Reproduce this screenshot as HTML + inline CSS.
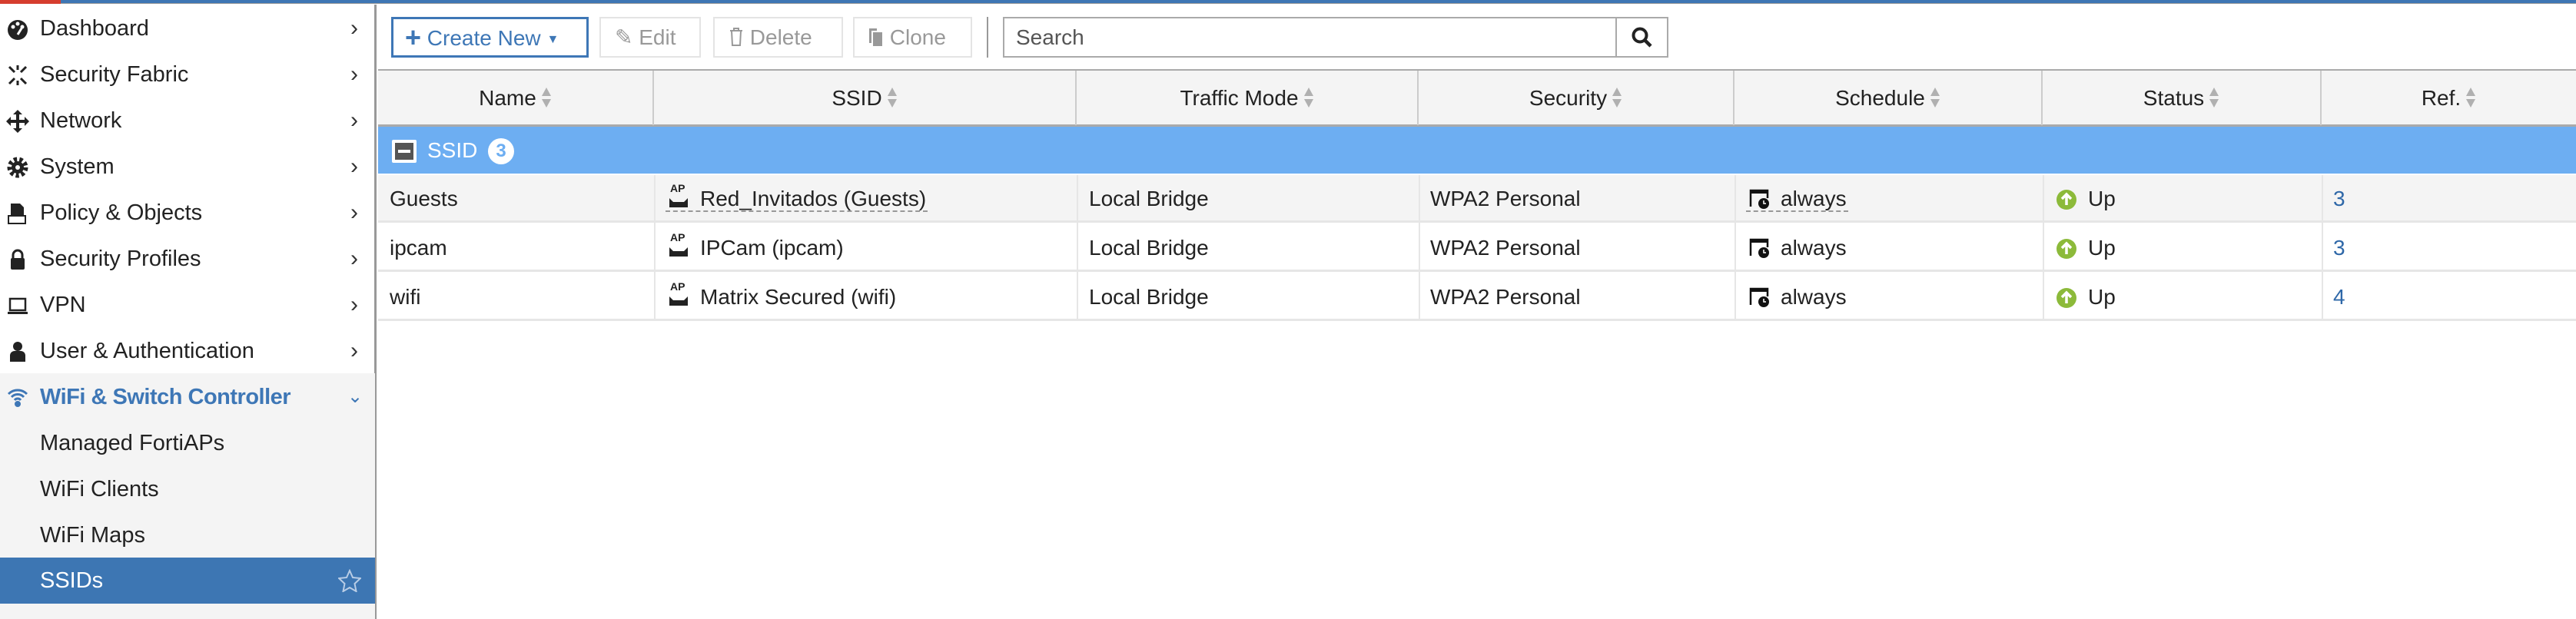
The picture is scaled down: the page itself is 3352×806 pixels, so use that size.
<!DOCTYPE html>
<html><head><meta charset="utf-8"><style>
*{margin:0;padding:0;box-sizing:border-box}
body{width:3352px;height:806px;overflow:hidden;background:#fff;font-family:"Liberation Sans",sans-serif;color:#222;position:relative}
.a{position:absolute}
.top{left:0;top:0;width:3352px;height:5px;background:#3e76b4;border-bottom:1px solid #999}
.side{left:0;top:6px;width:490px;height:800px;background:#fff;border-right:3px solid #999}
.it{position:absolute;left:0;width:488px;height:60px;font-size:29px;line-height:60px;padding-left:52px}
.ic{position:absolute;left:8px;top:16px;width:30px;height:30px}
.chev{position:absolute;left:456px;top:0;font-size:30px;color:#333}
.btn{position:absolute;top:22px;height:53px;border:2px solid #e4e4e4;font-size:28px;line-height:49px;color:#999;padding-left:18px}
.th{position:absolute;top:92px;height:71px;line-height:71px;text-align:center;font-size:28px;color:#222;border-right:2px solid #ccc}
.sort{display:inline-block;width:14px;height:30px;vertical-align:middle;margin-left:6px;position:relative;top:-3px}
.row{position:absolute;left:492px;width:2860px;height:62px;border-bottom:3px solid #e6e6e6}
.c{position:absolute;top:0;height:62px;line-height:62px;font-size:28px;color:#222}
.vl{position:absolute;top:228px;width:2px;height:190px;background:#e6e6e6}
</style></head><body>
<div class="a top"></div>
<div class="a" style="left:0;top:0;width:79px;height:5px;background:#d63d2e"></div>
<div class="a side">
 <div class="it" style="top:1px"><svg class="ic" viewBox="0 0 30 30"><circle cx="15" cy="16" r="13" fill="#222"/><circle cx="9" cy="12" r="2.5" fill="#fff"/><circle cx="15" cy="8" r="2.5" fill="#fff"/><circle cx="21" cy="12" r="2.5" fill="#fff"/><path d="M15 22 L20 14" stroke="#fff" stroke-width="3"/></svg>Dashboard<span class="chev">›</span></div>
 <div class="it" style="top:61px"><svg class="ic" viewBox="0 0 30 30" stroke="#222" stroke-width="3"><path d="M4 4l7 7M26 4l-7 7M4 26l7-7M26 26l-7-7M15 2v6M15 22v6"/></svg>Security Fabric<span class="chev">›</span></div>
 <div class="it" style="top:121px"><svg class="ic" viewBox="0 0 30 30" fill="#222"><path d="M13 5h4v20h-4zM3 13h24v4H3z"/><path d="M15 0l6 6H9zM15 30l6-6H9zM0 15l6-6v12zM30 15l-6-6v12z"/></svg>Network<span class="chev">›</span></div>
 <div class="it" style="top:181px"><svg class="ic" viewBox="0 0 30 30"><circle cx="15" cy="15" r="10" fill="none" stroke="#222" stroke-width="7" stroke-dasharray="4 3"/><circle cx="15" cy="15" r="8" fill="#222"/><circle cx="15" cy="15" r="3" fill="#fff"/></svg>System<span class="chev">›</span></div>
 <div class="it" style="top:241px"><svg class="ic" viewBox="0 0 30 30"><path d="M6 2h12l5 5v12H6z" fill="#222"/><rect x="3" y="18" width="22" height="10" fill="#fff" stroke="#222" stroke-width="2"/></svg>Policy &amp; Objects<span class="chev">›</span></div>
 <div class="it" style="top:301px"><svg class="ic" viewBox="0 0 30 30"><path d="M9 13V9a6 6 0 0112 0v4" fill="none" stroke="#222" stroke-width="3"/><rect x="6" y="13" width="18" height="15" rx="2" fill="#222"/></svg>Security Profiles<span class="chev">›</span></div>
 <div class="it" style="top:361px"><svg class="ic" viewBox="0 0 30 30"><rect x="5" y="6" width="20" height="15" fill="none" stroke="#222" stroke-width="2.5"/><rect x="2" y="23" width="26" height="3" fill="#222"/></svg>VPN<span class="chev">›</span></div>
 <div class="it" style="top:421px"><svg class="ic" viewBox="0 0 30 30" fill="#222"><circle cx="15" cy="8" r="6"/><path d="M5 28v-8a6 6 0 016-6h8a6 6 0 016 6v8z"/></svg>User &amp; Authentication<span class="chev">›</span></div>
 <div class="a" style="left:0;top:480px;width:488px;height:320px;background:#f4f4f4"></div>
 <div class="it" style="top:481px;color:#3e77b6;font-weight:bold;letter-spacing:-0.5px"><svg class="ic" viewBox="0 0 30 30" fill="none" stroke="#3e77b6" stroke-width="3"><path d="M3 10a17 17 0 0124 0M7 14a11 11 0 0116 0M11 18a5 5 0 018 0"/><circle cx="15" cy="23" r="2.5" fill="#3e77b6"/></svg>WiFi &amp; Switch Controller<span class="chev" style="font-weight:normal;color:#3e77b6;font-size:24px;left:452px">⌄</span></div>
 <div class="it" style="top:541px">Managed FortiAPs</div>
 <div class="it" style="top:601px">WiFi Clients</div>
 <div class="it" style="top:661px">WiFi Maps</div>
 <div class="it" style="top:720px;background:#3d76b3;color:#fff">SSIDs<svg class="a" style="left:440px;top:15px" width="30" height="30" viewBox="0 0 30 30"><path d="M15 2l4 9 10 1-7.5 7 2 10L15 24l-8.5 5 2-10L1 12l10-1z" fill="none" stroke="#b9cde6" stroke-width="2"/></svg></div>
</div>

<div class="a" style="left:509px;top:22px;width:257px;height:53px;border:3px solid #3e77b6;font-size:28px;line-height:47px;color:#3e77b6;padding-left:15px"><b style="font-size:36px;vertical-align:-2px">+</b> Create New <span style="font-size:16px;vertical-align:3px">▼</span></div>
<div class="btn" style="left:780px;width:132px">✎ Edit</div>
<div class="btn" style="left:928px;width:169px"><svg width="20" height="26" viewBox="0 0 20 26" style="vertical-align:-3px"><path d="M2 5h16M7 5V2h6v3M4 5l1 19h10l1-19" fill="none" stroke="#999" stroke-width="2"/></svg> Delete</div>
<div class="btn" style="left:1110px;width:155px"><svg width="20" height="26" viewBox="0 0 20 26" style="vertical-align:-3px"><path d="M1 2h10v3H4v16H1z" fill="#999"/><rect x="6" y="7" width="12" height="18" fill="#999"/></svg> Clone</div>
<div class="a" style="left:1284px;top:22px;width:2px;height:53px;background:#999"></div>
<div class="a" style="left:1305px;top:22px;width:866px;height:53px;border:2px solid #aaa;font-size:28px;line-height:49px;color:#555;padding-left:15px">Search</div>
<div class="a" style="left:2102px;top:22px;width:2px;height:53px;background:#aaa"></div>
<svg class="a" style="left:2122px;top:34px" width="30" height="30" viewBox="0 0 30 30"><circle cx="12" cy="12" r="8.5" fill="none" stroke="#222" stroke-width="4"/><path d="M18 18l8 8" stroke="#222" stroke-width="4.5"/></svg>

<div class="a" style="left:492px;top:90px;width:2860px;height:75px;background:#f4f4f4;border-top:2px solid #aaa;border-bottom:3px solid #aaa"></div>
<div class="th" style="left:492px;width:359px">Name<svg class="sort" viewBox="0 0 14 30"><path d="M7 2l6 11H1zM7 28l6-11H1z" fill="#b0b0b0"/></svg></div>
<div class="th" style="left:851px;width:550px">SSID<svg class="sort" viewBox="0 0 14 30"><path d="M7 2l6 11H1zM7 28l6-11H1z" fill="#b0b0b0"/></svg></div>
<div class="th" style="left:1401px;width:445px">Traffic Mode<svg class="sort" viewBox="0 0 14 30"><path d="M7 2l6 11H1zM7 28l6-11H1z" fill="#b0b0b0"/></svg></div>
<div class="th" style="left:1846px;width:411px">Security<svg class="sort" viewBox="0 0 14 30"><path d="M7 2l6 11H1zM7 28l6-11H1z" fill="#b0b0b0"/></svg></div>
<div class="th" style="left:2257px;width:401px">Schedule<svg class="sort" viewBox="0 0 14 30"><path d="M7 2l6 11H1zM7 28l6-11H1z" fill="#b0b0b0"/></svg></div>
<div class="th" style="left:2658px;width:363px">Status<svg class="sort" viewBox="0 0 14 30"><path d="M7 2l6 11H1zM7 28l6-11H1z" fill="#b0b0b0"/></svg></div>
<div class="th" style="left:3021px;width:331px;border-right:none">Ref.<svg class="sort" viewBox="0 0 14 30"><path d="M7 2l6 11H1zM7 28l6-11H1z" fill="#b0b0b0"/></svg></div>

<div class="a" style="left:492px;top:165px;width:2860px;height:61px;background:#6daef2"></div>
<div class="a" style="left:510px;top:182px;width:32px;height:30px;background:#fff;border-radius:2px"><div class="a" style="left:4px;top:4px;width:24px;height:22px;background:#555"></div><div class="a" style="left:8px;top:13px;width:16px;height:4px;background:#fff"></div></div>
<div class="a" style="left:556px;top:165px;line-height:61px;font-size:28px;color:#fff">SSID</div>
<div class="a" style="left:635px;top:180px;width:34px;height:34px;border-radius:50%;background:#fff;color:#6daef2;font-size:24px;line-height:34px;text-align:center;font-weight:bold">3</div>

<div class="row" style="top:228px;background:#f4f4f4"></div>
<div class="row" style="top:292px"></div>
<div class="row" style="top:356px"></div>
<div class="vl" style="left:851px"></div><div class="vl" style="left:1401px"></div><div class="vl" style="left:1846px"></div><div class="vl" style="left:2257px"></div><div class="vl" style="left:2658px"></div><div class="vl" style="left:3021px"></div>

<div class="c" style="left:507px;top:228px">Guests</div>
<div class="c" style="left:507px;top:292px">ipcam</div>
<div class="c" style="left:507px;top:356px">wifi</div>

<div class="c" style="left:866px;top:228px;border-bottom:2px dashed #999;height:48px;padding-right:2px"><span style="font-size:14px;font-weight:bold;position:absolute;left:6px;top:-14px">AP</span><svg class="a" style="left:4px;top:30px" width="26" height="12" viewBox="0 0 26 12"><path d="M1 0v12h24V0l-5 5H6z" fill="#222"/></svg><span style="margin-left:45px">Red_Invitados (Guests)</span></div>
<div class="c" style="left:866px;top:292px"><span style="font-size:14px;font-weight:bold;position:absolute;left:6px;top:-14px">AP</span><svg class="a" style="left:4px;top:30px" width="26" height="12" viewBox="0 0 26 12"><path d="M1 0v12h24V0l-5 5H6z" fill="#222"/></svg><span style="margin-left:45px">IPCam (ipcam)</span></div>
<div class="c" style="left:866px;top:356px"><span style="font-size:14px;font-weight:bold;position:absolute;left:6px;top:-14px">AP</span><svg class="a" style="left:4px;top:30px" width="26" height="12" viewBox="0 0 26 12"><path d="M1 0v12h24V0l-5 5H6z" fill="#222"/></svg><span style="margin-left:45px">Matrix Secured (wifi)</span></div>

<div class="c" style="left:1417px;top:228px">Local Bridge</div>
<div class="c" style="left:1417px;top:292px">Local Bridge</div>
<div class="c" style="left:1417px;top:356px">Local Bridge</div>
<div class="c" style="left:1861px;top:228px">WPA2 Personal</div>
<div class="c" style="left:1861px;top:292px">WPA2 Personal</div>
<div class="c" style="left:1861px;top:356px">WPA2 Personal</div>

<div class="c" style="left:2272px;top:228px;border-bottom:2px dashed #999;height:48px;width:133px"></div>
<svg class="a" style="left:2276px;top:245px" width="28" height="28" viewBox="0 0 28 28"><path d="M2 24V3h22v10" fill="none" stroke="#111" stroke-width="2.5"/><rect x="2" y="2" width="22" height="5" fill="#111"/><circle cx="19" cy="20" r="7" fill="#111"/><path d="M19 16v4h3" stroke="#fff" stroke-width="1.5" fill="none"/></svg>
<svg class="a" style="left:2276px;top:309px" width="28" height="28" viewBox="0 0 28 28"><path d="M2 24V3h22v10" fill="none" stroke="#111" stroke-width="2.5"/><rect x="2" y="2" width="22" height="5" fill="#111"/><circle cx="19" cy="20" r="7" fill="#111"/><path d="M19 16v4h3" stroke="#fff" stroke-width="1.5" fill="none"/></svg>
<svg class="a" style="left:2276px;top:373px" width="28" height="28" viewBox="0 0 28 28"><path d="M2 24V3h22v10" fill="none" stroke="#111" stroke-width="2.5"/><rect x="2" y="2" width="22" height="5" fill="#111"/><circle cx="19" cy="20" r="7" fill="#111"/><path d="M19 16v4h3" stroke="#fff" stroke-width="1.5" fill="none"/></svg>
<div class="c" style="left:2317px;top:228px">always</div>
<div class="c" style="left:2317px;top:292px">always</div>
<div class="c" style="left:2317px;top:356px">always</div>

<svg class="a" style="left:2675px;top:246px" width="28" height="28" viewBox="0 0 28 28"><circle cx="14" cy="14" r="13" fill="#8cba3a"/><path d="M14 21V8M8 13l6-6 6 6" stroke="#fff" stroke-width="3.5" fill="none"/></svg>
<svg class="a" style="left:2675px;top:310px" width="28" height="28" viewBox="0 0 28 28"><circle cx="14" cy="14" r="13" fill="#8cba3a"/><path d="M14 21V8M8 13l6-6 6 6" stroke="#fff" stroke-width="3.5" fill="none"/></svg>
<svg class="a" style="left:2675px;top:374px" width="28" height="28" viewBox="0 0 28 28"><circle cx="14" cy="14" r="13" fill="#8cba3a"/><path d="M14 21V8M8 13l6-6 6 6" stroke="#fff" stroke-width="3.5" fill="none"/></svg>
<div class="c" style="left:2717px;top:228px">Up</div>
<div class="c" style="left:2717px;top:292px">Up</div>
<div class="c" style="left:2717px;top:356px">Up</div>
<div class="c" style="left:3036px;top:228px;color:#2f68a8">3</div>
<div class="c" style="left:3036px;top:292px;color:#2f68a8">3</div>
<div class="c" style="left:3036px;top:356px;color:#2f68a8">4</div>
</body></html>
